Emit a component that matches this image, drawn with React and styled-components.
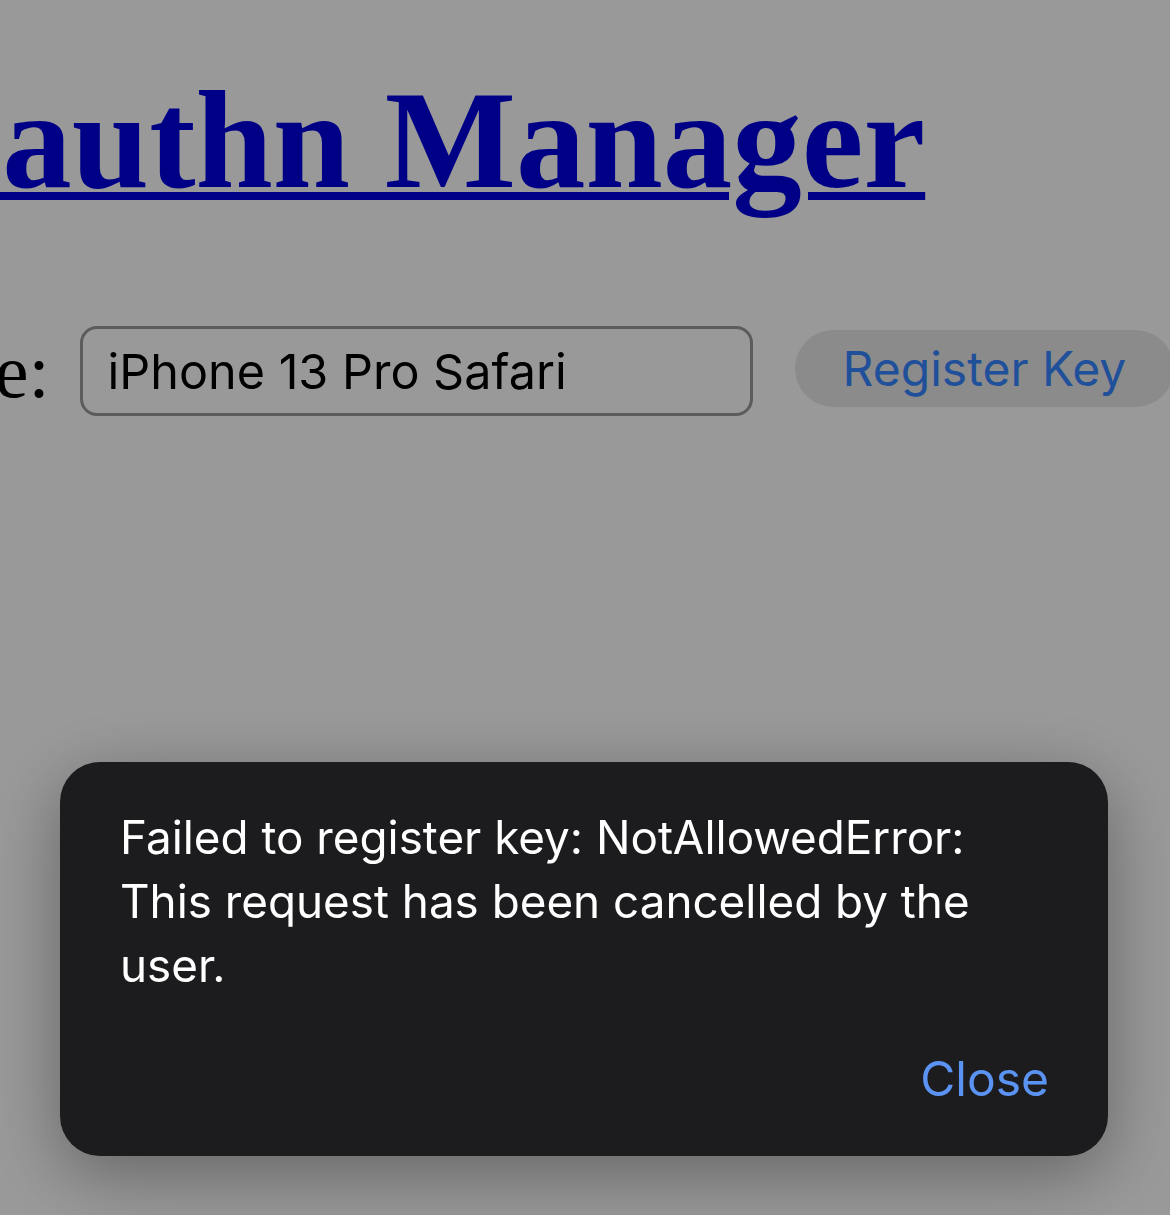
import * as React from "react"
import styled, { createGlobalStyle } from "styled-components"

const GlobalStyle = createGlobalStyle`
  html, body {
    margin: 0;
    padding: 0;
    background: #ffffff;
  }
  body {
    width: 1170px;
    height: 1215px;
    overflow: hidden;
  }
`

const Page = styled.main`
  width: 1170px;
  height: 1215px;
  overflow: hidden;
  background: #ffffff;
  font-family: "Liberation Serif", "Times New Roman", serif;
`

// the page is scrolled sideways, so the start of the title sits off screen
const Scroller = styled.div`
  margin-left: -268px;
  width: 1600px;
`

const Title = styled.h1`
  margin: 60px 0 0 0;
  font-size: 139px;
  font-weight: bold;
  line-height: normal;
  white-space: nowrap;
`

const TitleLink = styled.a`
  color: #0000e0;
  text-decoration: underline;
  text-decoration-thickness: 8px;
  text-underline-offset: 5px;
`

const Form = styled.form`
  display: flex;
  align-items: center;
  margin-top: 106px;
  padding-left: 115px;
`

const Label = styled.label`
  font-size: 76px;
  color: #000000;
  margin-right: 30px;
  white-space: nowrap;
`

const Input = styled.input`
  box-sizing: border-box;
  width: 673px;
  height: 90px;
  border: 3.5px solid #9a9a9a;
  border-radius: 17px;
  padding: 0 0 0 25px;
  font-family: Inter, "Noto Sans", sans-serif;
  font-size: 48.5px;
  color: #000000;
  background: #ffffff;
  outline: none;
`

const Button = styled.button`
  box-sizing: border-box;
  height: 77px;
  margin-left: 42px;
  margin-top: -5px;
  padding: 0 48px;
  border: none;
  border-radius: 39px;
  background: #e8e8e8;
  color: #3585ff;
  font-family: Inter, "Noto Sans", sans-serif;
  font-size: 48px;
  white-space: nowrap;
`

const Backdrop = styled.div`
  position: fixed;
  inset: 0;
  background: rgba(0, 0, 0, 0.4);
  display: flex;
  justify-content: center;
  align-items: flex-end;
  padding-bottom: 59px;
`

const Alert = styled.div`
  box-sizing: border-box;
  width: 1048px;
  height: 394px;
  margin-left: -2px;
  background: #1c1c1e;
  border-radius: 40px;
  box-shadow: 0 18px 70px rgba(0, 0, 0, 0.35);
  padding: 44px 59px 45px 60px;
  display: flex;
  flex-direction: column;
  font-family: Inter, "Noto Sans", sans-serif;
`

const Message = styled.p`
  margin: 0;
  color: #ffffff;
  font-size: 45.8px;
  line-height: 64px;
`

const Actions = styled.div`
  margin-top: auto;
  display: flex;
  justify-content: flex-end;
`

const CloseButton = styled.button`
  border: none;
  background: none;
  padding: 0;
  color: #5b93f2;
  font-family: Inter, "Noto Sans", sans-serif;
  font-size: 48px;
  line-height: 64px;
`

const App = () => (
  <Page>
    <GlobalStyle />
    <Scroller>
      <Title>
        <TitleLink href="#">Webauthn Manager</TitleLink>
      </Title>
      <Form onSubmit={e => e.preventDefault()}>
        <Label htmlFor="keyname">Name:</Label>
        <Input id="keyname" defaultValue="iPhone 13 Pro Safari" />
        <Button type="button">Register Key</Button>
      </Form>
    </Scroller>
    <Backdrop>
      <Alert role="alertdialog">
        <Message>
          Failed to register key: NotAllowedError: This request has been
          cancelled by the user.
        </Message>
        <Actions>
          <CloseButton type="button">Close</CloseButton>
        </Actions>
      </Alert>
    </Backdrop>
  </Page>
)

export default App
